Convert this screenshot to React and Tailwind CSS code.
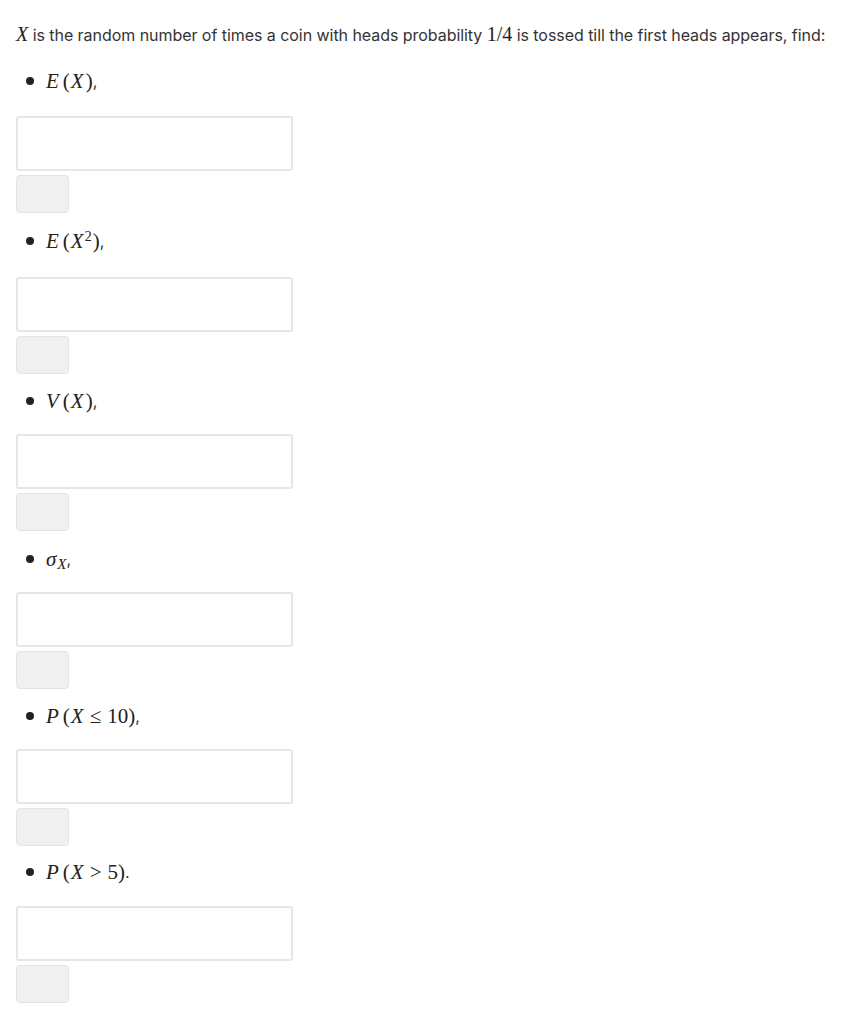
import React from 'react';

const serif = { fontFamily: '"Liberation Serif", "DejaVu Serif", serif' };

function V({ children, className = '' }) {
    return <span className={`italic ${className}`}>{children}</span>;
}

function M({ children, size = 'text-[21px]' }) {
    return (
        <span className={`${size} text-[#222] leading-6`} style={serif}>
            {children}
        </span>
    );
}

const items = [
    {
        key: 'ex',
        math: (
            <M>
                <V className="mr-[1px]">E</V>
                <span className="ml-[3px] mr-[1px]">(</span>
                <V className="mr-[2px]">X</V>)
            </M>
        ),
        tail: ',',
        pt: 'pt-[22px]',
        gap: 'mt-[23px]',
    },
    {
        key: 'ex2',
        math: (
            <M>
                <V className="mr-[1px]">E</V>
                <span className="ml-[3px] mr-[1px]">(</span>
                <V>X</V>
                <sup className="text-[14px] ml-[1px] mr-[1px]">2</sup>)
            </M>
        ),
        tail: ',',
        pt: 'pt-[16px]',
        gap: 'mt-[24px]',
    },
    {
        key: 'vx',
        math: (
            <M>
                <V className="mr-[1px]">V</V>
                <span className="ml-[3px] mr-[1px]">(</span>
                <V className="mr-[2px]">X</V>)
            </M>
        ),
        tail: ',',
        pt: 'pt-[15px]',
        gap: 'mt-[21px]',
    },
    {
        key: 'sx',
        math: (
            <M>
                <V>σ</V>
                <sub className="italic text-[15px] bottom-[-3px] ml-[1px]">X</sub>
            </M>
        ),
        tail: ',',
        pt: 'pt-[16px]',
        gap: 'mt-[21px]',
    },
    {
        key: 'p10',
        math: (
            <M>
                <V className="mr-[1px]">P</V>
                <span className="ml-[3px] mr-[1px]">(</span>
                <V>X</V>
                <span className="mx-[6px]">≤</span>10)
            </M>
        ),
        tail: ',',
        pt: 'pt-[15px]',
        gap: 'mt-[21px]',
    },
    {
        key: 'p5',
        math: (
            <M>
                <V className="mr-[1px]">P</V>
                <span className="ml-[3px] mr-[1px]">(</span>
                <V>X</V>
                <span className="mx-[6px]">&gt;</span>5)
            </M>
        ),
        tail: '.',
        pt: 'pt-[14px]',
        gap: 'mt-[22px]',
    },
];

export default function App() {
    return (
        <div className="w-[845px] min-h-[1024px] bg-white text-[#333] px-4 pt-[22px]" style={{ fontFamily: 'Inter, "Noto Sans", sans-serif' }}>
            {/* question */}
            <p className="text-[16px] leading-6 whitespace-nowrap tracking-[-0.05px]">
                <M size="text-[20px]">
                    <V>X</V>
                </M>{' '}
                is the random number of times a coin with heads probability{' '}
                <M size="text-[20px]">1/4</M> is tossed till the first heads appears, find:
            </p>

            <ul className="flex flex-col">
                {items.map((it) => (
                    <li key={it.key} className={it.pt}>
                        <div className="flex items-center h-6 text-[16px]">
                            <span className="w-[8px] h-[8px] rounded-full bg-[#222] ml-[10px] mr-[12px]"></span>
                            {it.math}
                            <span>{it.tail}</span>
                        </div>
                        <div className={`${it.gap} w-[277px] h-[55px] border-2 border-[#e6e6e6] rounded-[3px] bg-white`}></div>
                        <div className="mt-[4px] w-[53px] h-[38px] bg-[#f0f0f0] border border-[#e3e3e3] rounded-[4px]"></div>
                    </li>
                ))}
            </ul>
        </div>
    );
}
